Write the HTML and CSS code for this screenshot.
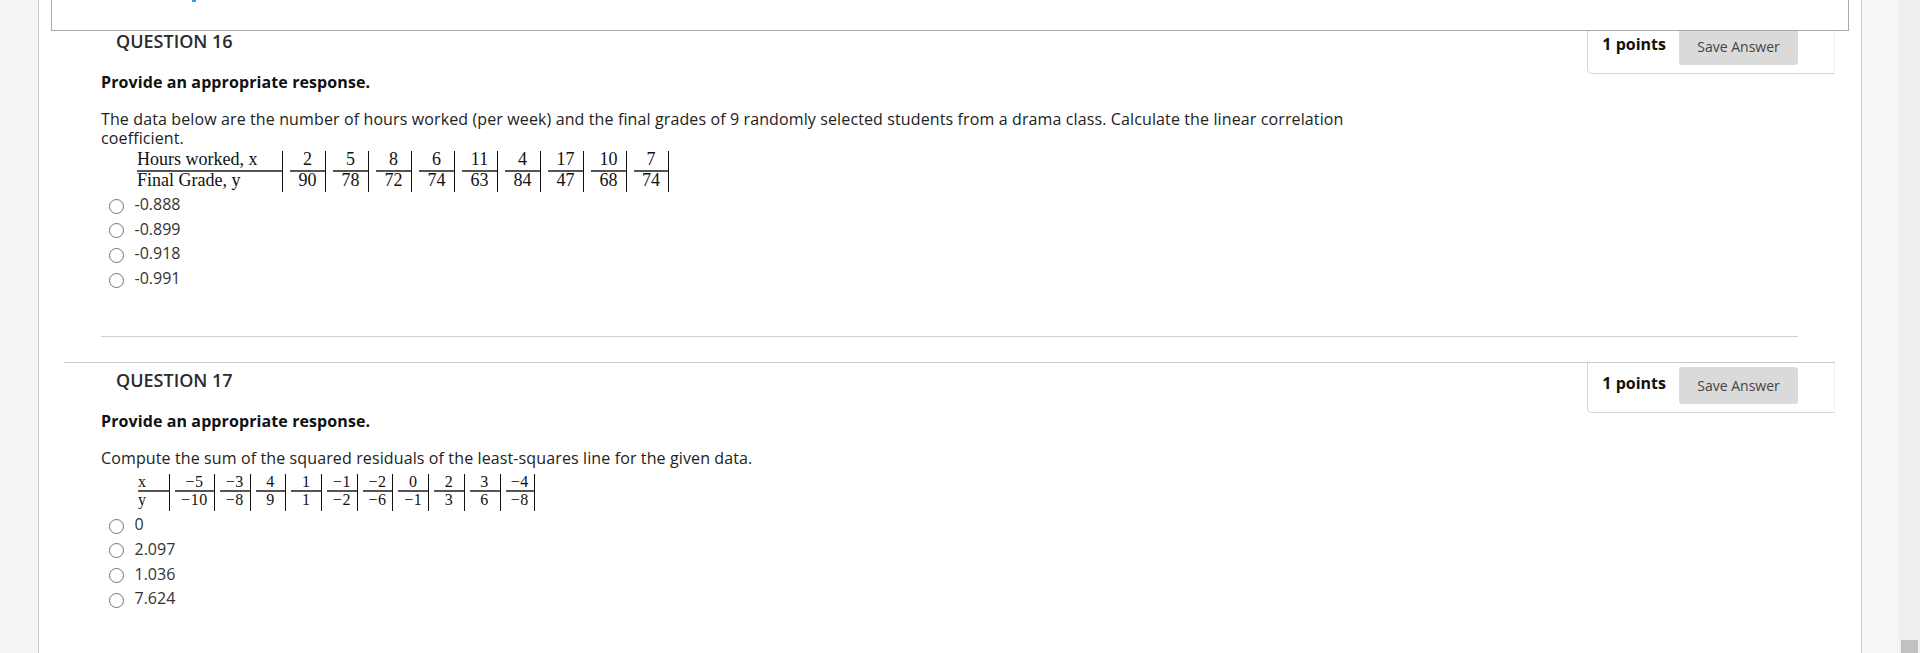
FILE: index.html
```html
<!DOCTYPE html>
<html lang="en">
<head>
<meta charset="utf-8">
<title>Test</title>
<link rel="stylesheet" href="styles.css">
</head>
<body>
<div class="page">
  <div class="gutter"></div>
  <main class="main">
    <div class="topbox"><span class="topmark"></span></div>

    <section class="question">
      <div class="qhead">
        <h3 class="qtitle">QUESTION 16</h3>
        <div class="points"><span class="pts">1 points</span><button class="save" type="button">Save Answer</button></div>
      </div>
      <div class="qbody">
        <p class="prompt">Provide an appropriate response.</p>
        <p class="stem">The data below are the number of hours worked (per week) and the final grades of 9 randomly selected students from a drama class. Calculate the linear correlation coefficient.</p>
        <div class="dtable t16">
          <div class="dcol dlabel"><div class="dtop">Hours worked, x</div><div class="dbot">Final Grade, y</div></div>
          <div class="dcol"><div class="dtop">2</div><div class="dbot">90</div></div>
          <div class="dcol"><div class="dtop">5</div><div class="dbot">78</div></div>
          <div class="dcol"><div class="dtop">8</div><div class="dbot">72</div></div>
          <div class="dcol"><div class="dtop">6</div><div class="dbot">74</div></div>
          <div class="dcol"><div class="dtop">11</div><div class="dbot">63</div></div>
          <div class="dcol"><div class="dtop">4</div><div class="dbot">84</div></div>
          <div class="dcol"><div class="dtop">17</div><div class="dbot">47</div></div>
          <div class="dcol"><div class="dtop">10</div><div class="dbot">68</div></div>
          <div class="dcol"><div class="dtop">7</div><div class="dbot">74</div></div>
        </div>
        <ul class="options o16">
          <li class="opt"><input class="radio" type="radio" name="q16"><span>-0.888</span></li>
          <li class="opt"><input class="radio" type="radio" name="q16"><span>-0.899</span></li>
          <li class="opt"><input class="radio" type="radio" name="q16"><span>-0.918</span></li>
          <li class="opt"><input class="radio" type="radio" name="q16"><span>-0.991</span></li>
        </ul>
        <hr class="qsep">
      </div>
    </section>

    <section class="question">
      <div class="qhead">
        <h3 class="qtitle">QUESTION 17</h3>
        <div class="points"><span class="pts">1 points</span><button class="save" type="button">Save Answer</button></div>
      </div>
      <div class="qbody">
        <p class="prompt">Provide an appropriate response.</p>
        <p class="stem">Compute the sum of the squared residuals of the least-squares line for the given data.</p>
        <div class="dtable t17">
          <div class="dcol dlabel"><div class="dtop">x</div><div class="dbot">y</div></div>
          <div class="dcol wide"><div class="dtop">&minus;5</div><div class="dbot">&minus;10</div></div>
          <div class="dcol"><div class="dtop">&minus;3</div><div class="dbot">&minus;8</div></div>
          <div class="dcol"><div class="dtop">4</div><div class="dbot">9</div></div>
          <div class="dcol"><div class="dtop">1</div><div class="dbot">1</div></div>
          <div class="dcol"><div class="dtop">&minus;1</div><div class="dbot">&minus;2</div></div>
          <div class="dcol"><div class="dtop">&minus;2</div><div class="dbot">&minus;6</div></div>
          <div class="dcol"><div class="dtop">0</div><div class="dbot">&minus;1</div></div>
          <div class="dcol"><div class="dtop">2</div><div class="dbot">3</div></div>
          <div class="dcol"><div class="dtop">3</div><div class="dbot">6</div></div>
          <div class="dcol"><div class="dtop">&minus;4</div><div class="dbot">&minus;8</div></div>
        </div>
        <ul class="options o17">
          <li class="opt"><input class="radio" type="radio" name="q17"><span>0</span></li>
          <li class="opt"><input class="radio" type="radio" name="q17"><span>2.097</span></li>
          <li class="opt"><input class="radio" type="radio" name="q17"><span>1.036</span></li>
          <li class="opt"><input class="radio" type="radio" name="q17"><span>7.624</span></li>
        </ul>
        <hr class="qsep">
      </div>
    </section>
  </main>
  <aside class="side">
    <div class="side-panel"></div>
    <div class="scrollbar"><div class="thumb"></div></div>
  </aside>
</div>
</body>
</html>
```

FILE: styles.css
```css
* { box-sizing: border-box; }
html, body { margin: 0; padding: 0; }
body {
  font-family: "Open Sans", "Liberation Sans", sans-serif;
  color: #222;
  background: #fff;
  overflow: hidden;
}
.page { display: flex; height: 653px; overflow: hidden; }

.gutter { width: 39px; flex: none; background: #f5f5f5; border-right: 1px solid #cbcbcb; }
.main { flex: 1; min-width: 0; background: #fff; }
.side { width: 59px; flex: none; display: flex; border-left: 1px solid #c9c9c9; }
.side-panel { width: 37px; background: #f6f6f6; }
.scrollbar { width: 21px; background: #efefef; display: flex; flex-direction: column; justify-content: flex-end; }
.thumb { height: 13px; margin: 0 2px; background: #c1c1c1; }

.topbox {
  position: relative;
  z-index: 1;
  height: 31px;
  margin: 0 12px -8px 12px;
  border: 1px solid #aaa;
  border-top: none;
  background: #fff;
}
.topmark { display: block; width: 4px; height: 2px; margin-left: 140px; background: #2d9fd9; }

.question { margin: 0 26px 0 25px; border-top: 1px solid #ccc; }
.question + .question { margin-top: 25px; }

.qhead { display: flex; justify-content: space-between; align-items: flex-start; }
.qtitle {
  margin: 5px 0 0 0;
  padding-left: 52px;
  font-size: 18px;
  font-weight: 600;
  line-height: 24px;
  color: #2b2b2b;
}
.points {
  width: 248px;
  height: 50px;
  display: flex;
  align-items: flex-start;
  justify-content: flex-end;
  gap: 13px;
  padding-right: 36px;
  border-left: 1px solid #d6d6d6;
  border-bottom: 1px solid #d6d6d6;
  border-right: 1px solid #f0f0f0;
  border-bottom-left-radius: 5px;
}
.pts { margin-top: 9px; font-size: 16px; font-weight: 700; line-height: 22px; color: #111; }
.save {
  margin-top: 4px;
  width: 119px;
  height: 37px;
  padding: 0;
  border: 0;
  border-radius: 3px;
  background: #dadada;
  font-family: "Open Sans", "Liberation Sans", sans-serif;
  font-size: 14px;
  color: #444;
}

.qbody { padding-left: 37px; }
.prompt { margin: -3px 0 0 0; font-size: 16px; font-weight: 700; line-height: 22px; letter-spacing: 0.1px; color: #111; }
.stem { margin: 17px 0 0 0; max-width: 1300px; font-size: 16px; line-height: 19px; letter-spacing: 0.12px; color: #222; }

.dtable { display: flex; font-family: "Liberation Serif", "Times New Roman", serif; color: #111; }
.dcol { border-left: 1px solid #111; padding-left: 7px; text-align: center; }
.dcol:last-child { border-right: 1px solid #111; }
.dlabel { border-left: none; padding-left: 0; text-align: left; }
.dtop { border-bottom: 2px solid #555; }

.t16 { margin: 3px 0 0 36px; font-size: 18px; }
.t16 .dcol { width: 43px; }
.t16 .dlabel { width: 145px; }
.t16 .dtop { line-height: 16px; padding-bottom: 3px; }
.t16 .dbot { line-height: 16px; padding-bottom: 4px; }

.t17 { margin: 6px 0 0 34px; font-size: 16px; letter-spacing: 0.6px; }
.t17 .dcol { width: 35.7px; padding-left: 5px; }
.t17 .dcol.wide { width: 45px; }
.t17 .dlabel { width: 34px; padding-left: 3px; }
.t17 .dtop { line-height: 16px; }
.t17 .dbot { line-height: 16px; padding-bottom: 3px; }

.options { list-style: none; margin: 0; padding: 0; }
.o17 { margin-top: 1.5px; }
.opt { display: flex; align-items: flex-start; height: 24.7px; font-size: 16px; line-height: 24.7px; color: #333; }
.radio {
  -webkit-appearance: none;
  appearance: none;
  flex: none;
  width: 15px;
  height: 15px;
  margin: 6.5px 10.5px 0 8px;
  border: 1px solid #737373;
  border-radius: 50%;
  background: #fff;
}

.qsep { height: 0; margin: 45px 37px 0 0; border: 0; border-top: 1px solid #d0d0d0; }
```
